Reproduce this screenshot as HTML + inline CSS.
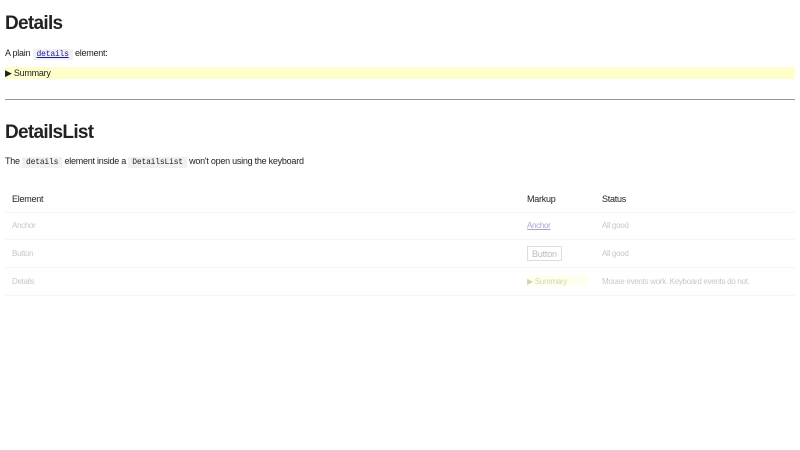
<!DOCTYPE html>
<html><head><style>
body{margin:0;width:800px;height:450px;background:#fff;font-family:"Liberation Sans",sans-serif;color:#222;position:relative;overflow:hidden}
.a{position:absolute;white-space:nowrap}
h1{margin:0;font-size:19px;font-weight:bold;position:absolute;left:5px;color:#222;letter-spacing:-0.7px}
.t{font-size:9px;letter-spacing:-0.25px}
code{font-family:"Liberation Mono",monospace;font-size:8px;background:#f1f1f1;padding:1px 4px;letter-spacing:-0.2px}
.g{color:#c8c8c8;font-size:8px;letter-spacing:-0.3px}
.line{position:absolute;left:5px;width:790px;height:1px;background:#f5f5f5}
</style></head><body>
<h1 style="top:13px">Details</h1>
<div class="a t" style="left:5px;top:48px">A plain <code style="color:#1a1a9a;text-decoration:underline">details</code> element:</div>
<div class="a" style="left:5px;top:67px;width:790px;height:12px;background:#ffffcc"></div>
<div class="a t" style="left:5px;top:68px">&#9654;&#xFE0E; Summary</div>
<div class="a" style="left:5px;top:99px;width:790px;height:1px;background:#999"></div>
<h1 style="top:122px">DetailsList</h1>
<div class="a t" style="left:5px;top:156px">The <code>details</code> element inside a <code>DetailsList</code> won't open using the keyboard</div>
<div class="a t" style="left:12px;top:194px">Element</div>
<div class="a t" style="left:527px;top:194px">Markup</div>
<div class="a t" style="left:602px;top:194px">Status</div>
<div class="line" style="top:212px"></div>
<div class="a g" style="left:12px;top:221px">Anchor</div>
<div class="a g" style="left:527px;top:221px;color:#a9a7cf;text-decoration:underline">Anchor</div>
<div class="a g" style="left:602px;top:221px">All good</div>
<div class="line" style="top:239px"></div>
<div class="a g" style="left:12px;top:249px">Button</div>
<div class="a" style="left:527px;top:246px;width:35px;height:15px;border:1px solid #ddd;box-sizing:border-box"></div>
<div class="a" style="left:532px;top:249px;font-size:9px;color:#bbb;letter-spacing:-0.2px">Button</div>
<div class="a g" style="left:602px;top:249px">All good</div>
<div class="line" style="top:267px"></div>
<div class="a" style="left:527px;top:275px;width:62px;height:11px;background:#fffff0"></div>
<div class="a g" style="left:12px;top:277px">Details</div>
<div class="a g" style="left:527px;top:277px;color:#d8d4a8">&#9654;&#xFE0E; Summary</div>
<div class="a g" style="left:602px;top:277px">Mouse events work. Keyboard events do not.</div>
<div class="line" style="top:295px"></div>
</body></html>
